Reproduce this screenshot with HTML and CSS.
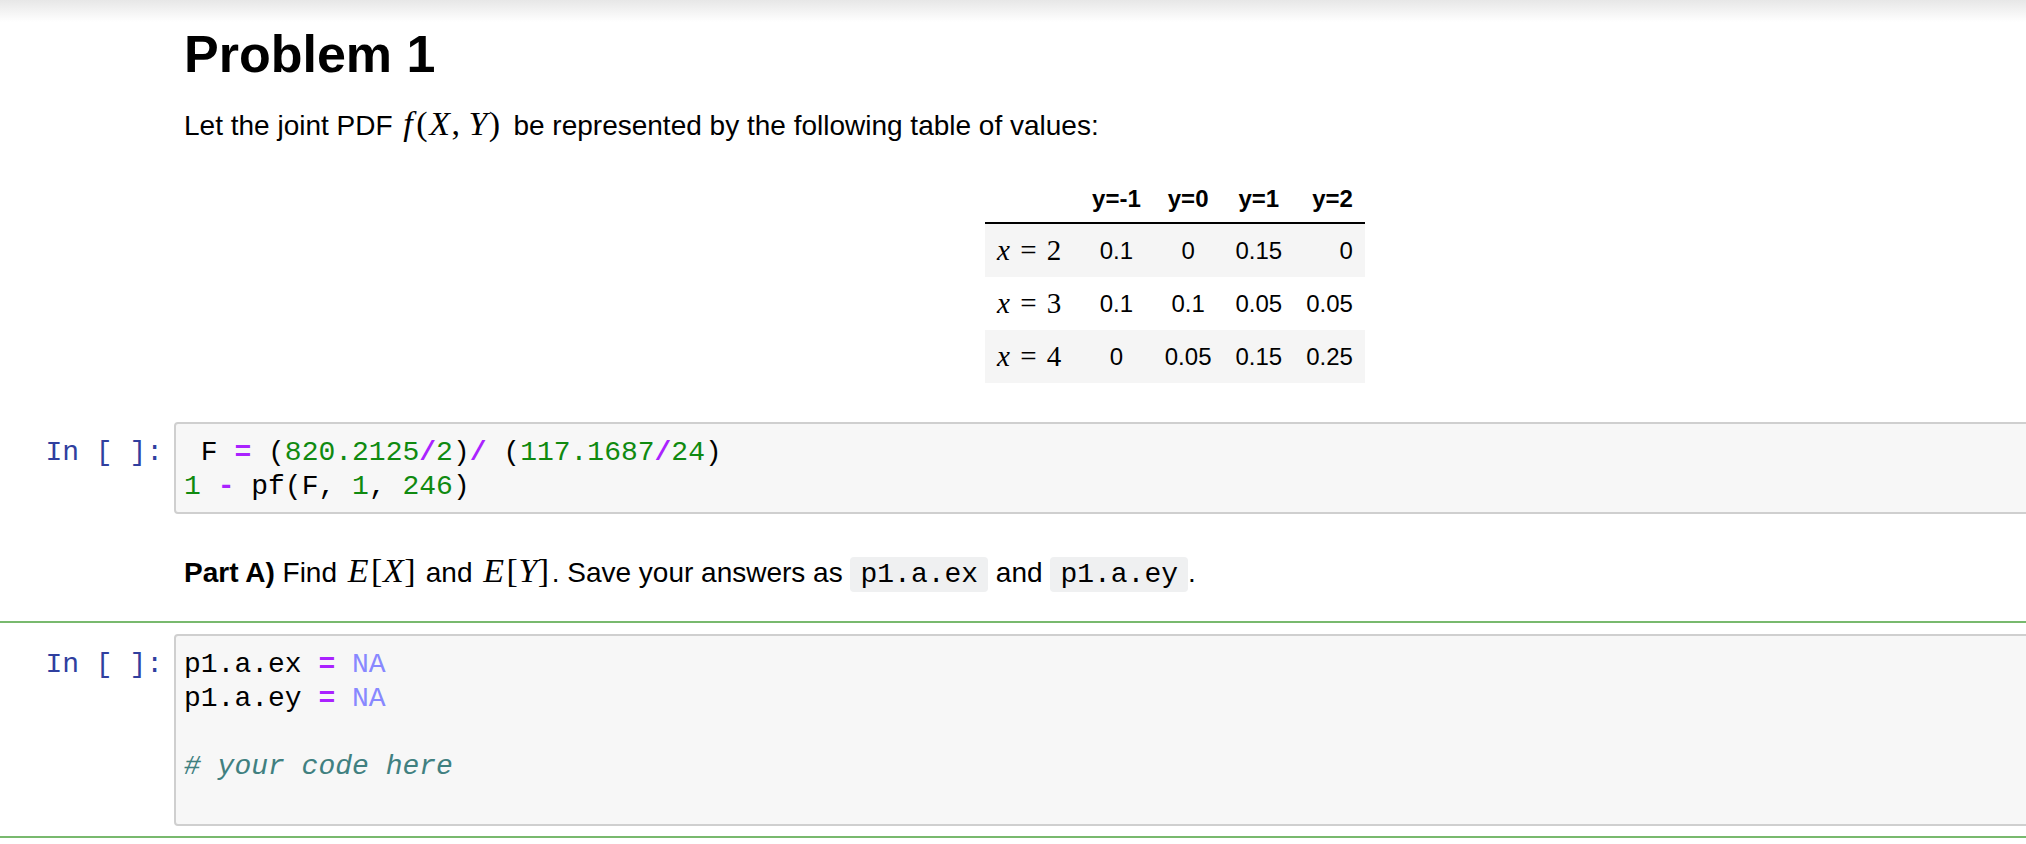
FILE: index.html
```html
<!DOCTYPE html>
<html lang="en">
<head>
<meta charset="utf-8">
<title>Problem 1</title>
<link rel="stylesheet" href="styles.css">
</head>
<body>
<div class="notebook">
  <div class="cell text-cell first">
    <div class="prompt"></div>
    <div class="inner">
      <div class="rendered">
        <h1>Problem 1</h1>
        <p>Let the joint PDF <span class="math"><i>f</i>(<i>X</i>,<span class="thin"></span><i>Y</i>)</span> be represented by the following table of values:</p>
        <table class="pdf">
          <thead>
            <tr><th class="lbl"></th><th class="c">y=-1</th><th class="c">y=0</th><th class="c">y=1</th><th class="r">y=2</th></tr>
          </thead>
          <tbody>
            <tr><td class="lbl"><span class="tmath"><i>x</i> = 2</span></td><td class="c">0.1</td><td class="c">0</td><td class="c">0.15</td><td class="r">0</td></tr>
            <tr><td class="lbl"><span class="tmath"><i>x</i> = 3</span></td><td class="c">0.1</td><td class="c">0.1</td><td class="c">0.05</td><td class="r">0.05</td></tr>
            <tr><td class="lbl"><span class="tmath"><i>x</i> = 4</span></td><td class="c">0</td><td class="c">0.05</td><td class="c">0.15</td><td class="r">0.25</td></tr>
          </tbody>
        </table>
      </div>
    </div>
  </div>

  <div class="cell code-cell">
    <div class="prompt">In&nbsp;[&nbsp;]:</div>
    <div class="inner">
      <div class="input-area"><pre> F <span class="op">=</span> (<span class="num">820.2125</span><span class="op">/</span><span class="num">2</span>)<span class="op">/</span> (<span class="num">117.1687</span><span class="op">/</span><span class="num">24</span>)
<span class="num">1</span> <span class="op">-</span> pf(F, <span class="num">1</span>, <span class="num">246</span>)</pre></div>
    </div>
  </div>

  <div class="cell text-cell parta">
    <div class="prompt"></div>
    <div class="inner">
      <div class="rendered">
        <p><strong>Part A)</strong> Find <span class="math tight"><i>E</i>[<i>X</i>]</span> and <span class="math tight"><i>E</i>[<i>Y</i>]</span>. Save your answers as <code>p1.a.ex</code> and <code>p1.a.ey</code>.</p>
      </div>
    </div>
  </div>

  <div class="cell code-cell selected">
    <div class="prompt">In&nbsp;[&nbsp;]:</div>
    <div class="inner">
      <div class="input-area"><pre>p1.a.ex <span class="op">=</span> <span class="atom">NA</span>
p1.a.ey <span class="op">=</span> <span class="atom">NA</span>
 
<span class="comment"># your code here</span>
 </pre></div>
    </div>
  </div>
</div>
</body>
</html>
```

FILE: styles.css
```css
html, body {
  margin: 0;
  padding: 0;
}

body {
  background: #ffffff linear-gradient(#e7e7e7, #ffffff 22px) no-repeat;
  background-size: 100% 22px;
  overflow: hidden;
  font-family: "Liberation Sans", Arial, Helvetica, sans-serif;
  color: #000;
}

.notebook {
  width: 2176px;
}

.cell {
  display: flex;
  align-items: flex-start;
}

.prompt {
  flex: 0 0 174px;
  box-sizing: border-box;
  padding-right: 11px;
  text-align: right;
  font-family: "Liberation Mono", "Courier New", monospace;
  font-size: 28px;
  line-height: 34px;
  color: #303f9f;
  white-space: nowrap;
}

.inner {
  flex: 1 1 auto;
  min-width: 0;
}

.rendered {
  padding: 0 10px;
}

.first .rendered {
  padding-top: 24px;
  padding-bottom: 27px;
}

h1 {
  margin: 0;
  font-size: 52px;
  line-height: 60px;
  font-weight: 700;
}

p {
  margin: 0;
  font-size: 28px;
  line-height: 40px;
}

.first p {
  margin-top: 22px;
}

.math {
  font-family: "Liberation Serif", "Times New Roman", serif;
  font-size: 34px;
  line-height: 1;
  letter-spacing: 1.5px;
  margin: 0 4px 0 3px;
}

.math.tight {
  letter-spacing: 0.5px;
  margin: 0 2px 0 3px;
}

.math i {
  font-style: italic;
}

.math i:first-child {
  margin-right: 2px;
}

.thin {
  display: inline-block;
  width: 7px;
}

/* table */
.pdf {
  margin: 24px auto 0;
  border-collapse: collapse;
  border-spacing: 0;
  font-size: 24px;
}

.pdf th {
  font-weight: 700;
  padding: 15px 12px 9px;
  line-height: 28px;
  border-bottom: 2px solid #000;
}

.pdf td {
  padding: 0 12px;
  height: 53px;
  line-height: 28px;
}

.pdf tbody tr:nth-child(odd) {
  background: #f5f5f5;
}

.pdf .c { text-align: center; }
.pdf .r { text-align: right; }
.pdf .lbl { text-align: left; width: 71px; }

.tmath {
  font-family: "Liberation Serif", "Times New Roman", serif;
  font-size: 29px;
  white-space: nowrap;
  word-spacing: 3px;
}

/* code cells */
.code-cell {
  padding: 12px 0;
}

.code-cell .prompt {
  padding-top: 14px;
}

.input-area {
  border: 2px solid #cfcfcf;
  border-radius: 4px;
  background: #f7f7f7;
}

.input-area pre {
  margin: 0;
  padding: 12px 8px 8px;
  font-family: "Liberation Mono", "Courier New", monospace;
  font-size: 28px;
  line-height: 34px;
  color: #000;
}

.op { color: #aa22ff; font-weight: 700; }
.num { color: #108a10; }
.atom { color: #8888ff; }
.comment { color: #408080; font-style: italic; }

/* Part A */
.parta .rendered {
  padding-top: 27px;
  padding-bottom: 26px;
}

code {
  font-family: "Liberation Mono", "Courier New", monospace;
  font-size: 28px;
  background: #eff0f1;
  padding: 2px 10px;
  border-radius: 4px;
}

/* selected cell (edit mode) */
.selected {
  border-top: 2px solid #78b96e;
  border-bottom: 2px solid #78b96e;
  padding: 11px 0 10px;
}

.selected pre {
  padding-bottom: 6px;
}
```
